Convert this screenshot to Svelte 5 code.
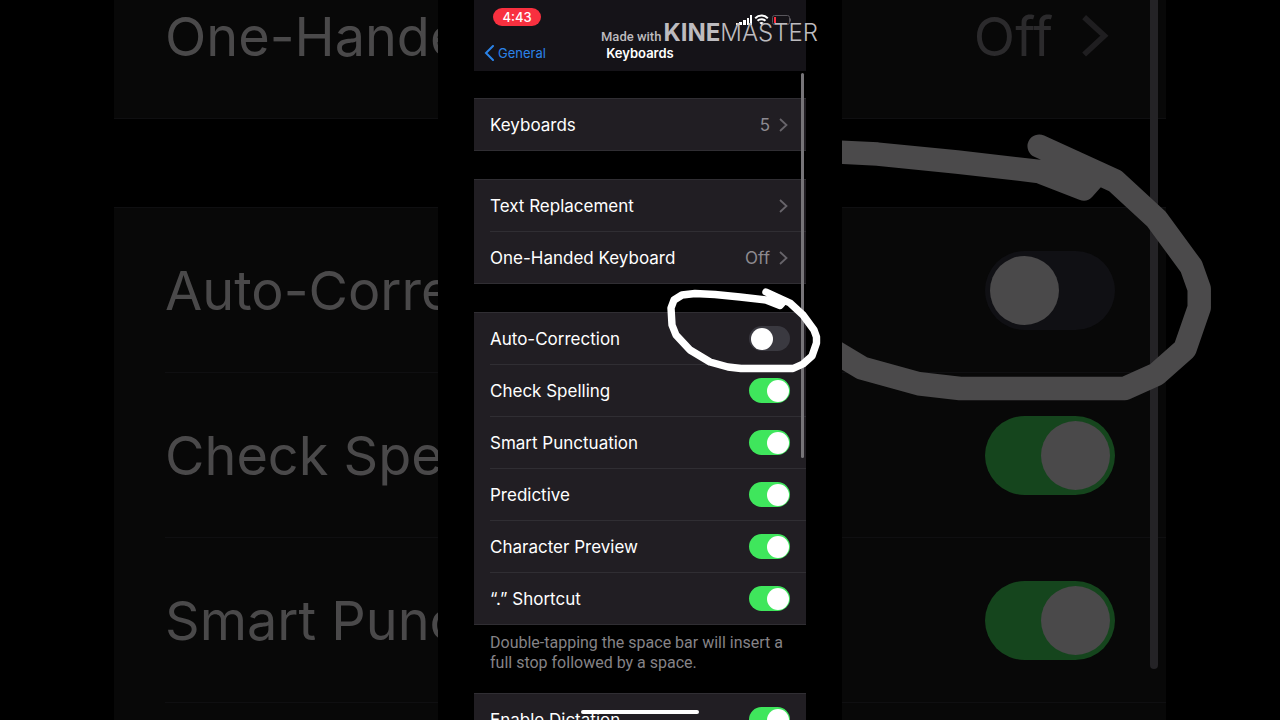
<script>
	let replacement = [
		{ label: 'Text Replacement', value: '' },
		{ label: 'One-Handed Keyboard', value: 'Off' }
	];

	let toggles = [
		{ label: 'Auto-Correction', on: false },
		{ label: 'Check Spelling', on: true },
		{ label: 'Smart Punctuation', on: true },
		{ label: 'Predictive', on: true },
		{ label: 'Character Preview', on: true },
		{ label: '“.” Shortcut', on: true }
	];

	let dictation = { label: 'Enable Dictation', on: true };
</script>

{#snippet linkRow(item)}
	<button class="row" type="button">
		<span class="inner">
			<span class="label">{item.label}</span>
			<span class="value">{item.value}</span>
			<svg class="chevron" viewBox="0 0 9 14" aria-hidden="true">
				<path d="M1 1l6.5 6L1 13" />
			</svg>
		</span>
	</button>
{/snippet}

{#snippet toggleRow(item)}
	<label class="row">
		<span class="inner">
			<span class="label">{item.label}</span>
			<input class="switch" type="checkbox" role="switch" checked={item.on} />
		</span>
	</label>
{/snippet}

{#snippet scribble()}
	<path
		class="ink"
		d="M766 292L790 303L803 315L814 330L816.5 337V343L812 356L803 364L793 368.5H741L728 367L710 362L690 350L676 335L672 325L671 308L674 300L682 295L695 293.5L715 294.5L740 297L766 300L780 305.5L784 301L772 297"
	/>
{/snippet}

<main class="stage">
	<div class="backdrop" inert aria-hidden="true">
		<div class="list">
			<div class="group">{@render linkRow(replacement[1])}</div>
			<div class="group">
				{#each toggles.slice(0, 4) as item}
					{@render toggleRow(item)}
				{/each}
			</div>
		</div>
		<div class="scrollbar"></div>
	</div>
	<svg class="scribble dim" viewBox="438 246 404 227" aria-hidden="true">
		{@render scribble()}
	</svg>

	<div class="frame">
		<div class="phone">
			<header>
				<div class="status">
					<span class="time">4:43</span>
					<svg class="signals" viewBox="0 0 56 12" aria-hidden="true">
						<path d="M1 9h2v2H1zM4 8h3v3H4zM8 6h3v5H8zM12 4h2v7h-2zM15 1h2v10h-2z" fill="#fff" />
						<path
							d="M20.2 4.2c3.7-3.6 8.9-3.6 12.6 0M22.5 6.7c2.2-2.1 5.8-2.1 8 0"
							fill="none"
							stroke="#fff"
							stroke-width="2"
						/>
						<path d="M24.3 8.7c1.3-1.1 3-1.1 4.3 0L26.5 11z" fill="#fff" />
						<rect x="37.5" y="1.5" width="17" height="9" rx="2" fill="none" stroke="#59565c" />
						<path d="M55.5 4.5v3" stroke="#59565c" />
						<rect x="39" y="3" width="2" height="6" fill="#ff3040" />
					</svg>
				</div>
				<nav>
					<a class="back" href="#general">
						<svg viewBox="0 0 10 16" aria-hidden="true"><path d="M9 1L2 8l7 7" /></svg>
						General
					</a>
					<h1>Keyboards</h1>
				</nav>
			</header>

			<div class="list">
				<div class="group">{@render linkRow({ label: 'Keyboards', value: '5' })}</div>
				<div class="group">
					{#each replacement as item}
						{@render linkRow(item)}
					{/each}
				</div>
				<section>
					<div class="group">
						{#each toggles as item}
							{@render toggleRow(item)}
						{/each}
					</div>
					<p>Double-tapping the space bar will insert a full stop followed by a space.</p>
				</section>
				<div class="group">{@render toggleRow(dictation)}</div>
			</div>

			<div class="scrollbar"></div>
			<div class="home"></div>
		</div>

		<svg class="scribble" viewBox="438 0 404 720" aria-hidden="true">
			{@render scribble()}
		</svg>
		<div class="watermark">
			<span class="made">Made with</span>
			<span class="brand"><b>KINE</b>MASTER</span>
		</div>
	</div>
</main>

<style>
	:global(body) {
		background: #000;
	}

	.stage {
		position: relative;
		display: flex;
		justify-content: center;
		height: 100vh;
		overflow: hidden;
		background: #000;
		color: #fff;
		font-family: Inter, 'Liberation Sans', sans-serif;
	}

	/* sizes shared by both copies of the list */
	.phone {
		--row: 52px;
		--pad: 16px;
		--font: 17px;
		--gap: 28px;
		--switch-w: 41px;
		--switch-h: 25px;
		--knob: 22px;
		--chev: 9px;
		--chev-right: 2px;
		--group: #211e23;
		--line: #302e33;
		--text: #fff;
		--muted: #8d8a90;
		--arrow: #67646a;
		--off: #3a3940;
		--on: #3fe65c;
	}

	.backdrop {
		--row: 165px;
		--pad: 51px;
		--font: 54px;
		--gap: 88px;
		--switch-w: 130px;
		--switch-h: 79px;
		--knob: 69px;
		--chev: 28px;
		--chev-right: 6px;
		--group: #080808;
		--line: #0f0f11;
		--text: #4a494a;
		--muted: #2b2a2c;
		--arrow: #1f1e20;
		--off: #101014;
		--on: #15451d;
		position: absolute;
		top: 0;
		width: 1052px;
	}

	.backdrop .list {
		margin-top: -47px;
	}

	.frame {
		position: relative;
		width: 404px;
		background: #000;
	}

	.phone {
		position: relative;
		width: 332px;
		height: 100%;
		margin: 0 auto;
		overflow: hidden;
	}

	header {
		background: #151318;
	}

	.status {
		display: flex;
		align-items: center;
		justify-content: space-between;
		height: 34px;
		padding: 0 15px 0 19px;
	}

	.time {
		width: 48px;
		border-radius: 9px;
		background: #f8303f;
		font-size: 13px;
		font-weight: 500;
		line-height: 18px;
		text-align: center;
	}

	.signals {
		width: 56px;
		height: 12px;
		margin-top: 6px;
	}

	nav {
		display: grid;
		grid-template-columns: 1fr auto 1fr;
		align-items: center;
		height: 37px;
		padding: 0 10px;
	}

	.back {
		display: flex;
		align-items: center;
		gap: 4px;
		color: #2b83e8;
		font-size: 13px;
		text-decoration: none;
	}

	.back svg {
		width: 10px;
		height: 16px;
		fill: none;
		stroke: #2b83e8;
		stroke-width: 2;
		stroke-linecap: round;
	}

	h1 {
		margin: 0;
		font-size: 13px;
		font-weight: 600;
	}

	.list {
		display: flex;
		flex-direction: column;
		gap: var(--gap);
	}

	.phone .list {
		padding-top: 27px;
	}

	section + .group {
		margin-top: -8px;
	}

	.group {
		border-top: 1px solid var(--line);
		background: var(--group);
	}

	.row {
		display: block;
		box-sizing: border-box;
		width: 100%;
		height: var(--row);
		padding: 0 0 0 var(--pad);
		border: 0;
		background: none;
		color: var(--text);
		font-family: inherit;
		font-size: var(--font);
		text-align: left;
	}

	.inner {
		display: flex;
		align-items: center;
		box-sizing: border-box;
		height: 100%;
		padding-right: var(--pad);
		border-bottom: 1px solid var(--line);
	}

	.row:last-child {
		padding-left: 0;
		border-bottom: 1px solid var(--line);
	}

	.row:last-child .inner {
		padding-left: var(--pad);
		border-bottom: 0;
	}

	.label {
		flex: 1;
		white-space: nowrap;
	}

	.value {
		color: var(--muted);
	}

	.chevron {
		width: var(--chev);
		margin: 0 var(--chev-right) 0 var(--chev);
		fill: none;
		stroke: var(--arrow);
		stroke-width: 1.8;
	}

	.switch {
		appearance: none;
		display: flex;
		align-items: center;
		box-sizing: border-box;
		width: var(--switch-w);
		height: var(--switch-h);
		margin: 0;
		padding: 0 calc((var(--switch-h) - var(--knob)) / 2);
		border-radius: var(--switch-h);
		background: var(--off);
	}

	.switch::before {
		content: '';
		width: var(--knob);
		height: var(--knob);
		border-radius: 50%;
		background: var(--text);
	}

	.switch:checked {
		justify-content: flex-end;
		background: var(--on);
	}

	p {
		margin: 8px 16px 0;
		color: #858387;
		font-family: Roboto, 'Liberation Sans', sans-serif;
		font-size: 16px;
		line-height: 20px;
	}

	.scrollbar {
		position: absolute;
		top: 73px;
		right: 2px;
		width: 3px;
		height: 385px;
		border-radius: 2px;
		background: #777579;
	}

	.backdrop .scrollbar {
		top: -10px;
		right: 8px;
		width: 8px;
		height: 679px;
		border-radius: 4px;
		background: #242326;
	}

	.home {
		position: absolute;
		bottom: 6px;
		left: 50%;
		width: 118px;
		height: 4px;
		margin-left: -59px;
		border-radius: 2px;
		background: #fff;
	}

	.scribble {
		position: absolute;
		top: 0;
		left: 0;
		width: 100%;
		height: 720px;
		pointer-events: none;
	}

	.ink {
		fill: none;
		stroke: #fff;
		stroke-width: 7.4;
		stroke-linecap: round;
		stroke-linejoin: round;
	}

	.dim .ink {
		stroke: #4b4a4b;
	}

	.watermark {
		position: absolute;
		top: 18px;
		right: 24px;
		display: flex;
		align-items: baseline;
		gap: 2px;
		color: #bdbbbf;
		line-height: 30px;
		white-space: nowrap;
	}

	.made {
		font-family: Roboto, sans-serif;
		font-size: 13px;
		font-weight: 500;
	}

	.brand {
		font-size: 24px;
		font-weight: 300;
	}

	.brand b {
		font-weight: 700;
	}
</style>
